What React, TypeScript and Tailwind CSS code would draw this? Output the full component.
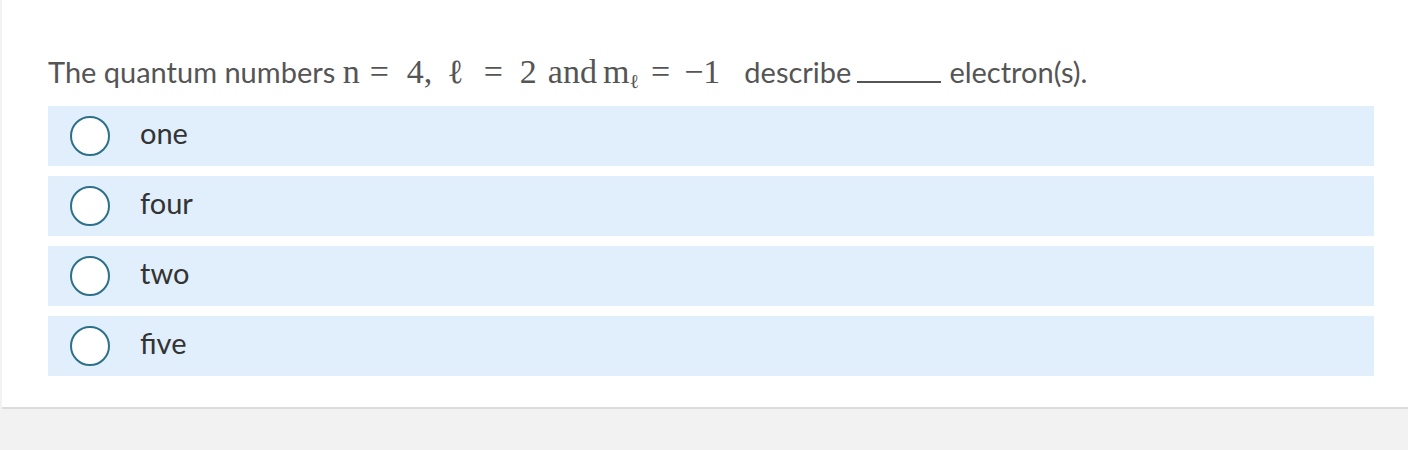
import React from 'react';

// Pregunta de opción múltiple sobre números cuánticos.

const OPTIONS = ['one', 'four', 'two', 'five'];

const sans = { fontFamily: 'Lato, "Open Sans", sans-serif' };

function Math({ children }: { children: React.ReactNode }) {
  return (
    <span className="font-['Liberation_Serif','DejaVu_Serif',serif] text-[34px] text-[#555]">
      {children}
    </span>
  );
}

function Option({ label }: { label: string }) {
  return (
    <label className="flex h-[60px] cursor-pointer items-center bg-[#e1effc] pl-[22px]">
      <span className="h-[40px] w-[40px] shrink-0 rounded-full border-2 border-[#2d7088] bg-white" />
      <span className="mb-[6px] ml-[30px] text-[29px] text-[#333]">{label}</span>
    </label>
  );
}

export default function App() {
  return (
    <div className="min-h-[450px] bg-[#f2f2f2]" style={sans}>
      <div className="ml-[2px] h-[407px] bg-white pl-[46px] pr-[34px] pt-[53px] shadow-[0_2px_0_#dcdcdc]">
        <p className="text-[29px] leading-[38px] text-[#555]">
          The quantum numbers{' '}
          <Math>
            n<span className="ml-[10px] mr-[18px]">=</span>4,
            <span className="ml-[15px]">ℓ</span>
            <span className="ml-[20px] mr-[17px]">=</span>2
            <span className="ml-[11px] mr-[6px]">and</span>m
            <sub className="text-[20px]">ℓ</sub>
            <span className="ml-[12px] mr-[14px]">=</span>−1
          </Math>
          <span className="ml-[24px]">describe</span>
          <span className="ml-[6px] mr-[8px] inline-block w-[84px] border-b-2 border-[#555] align-baseline" />
          electron(s).
        </p>
        <div className="mt-[15px] flex flex-col gap-[10px]">
          {OPTIONS.map((o) => (
            <Option key={o} label={o} />
          ))}
        </div>
      </div>
    </div>
  );
}
